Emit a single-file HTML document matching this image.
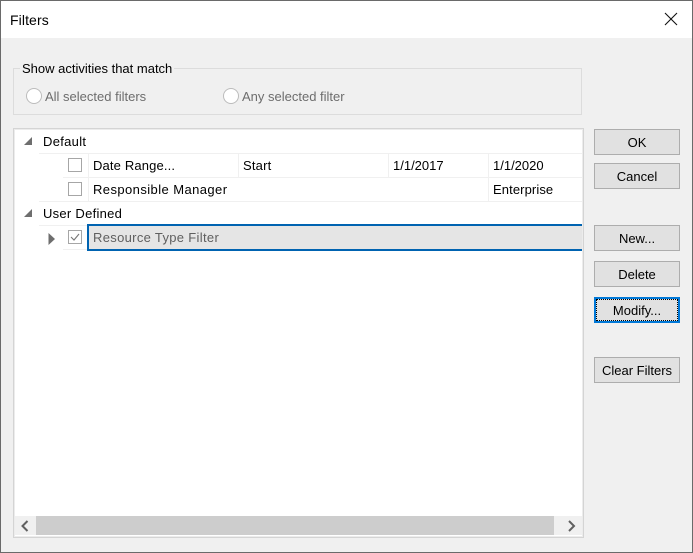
<!DOCTYPE html>
<html>
<head>
<meta charset="utf-8">
<style>
html,body{margin:0;padding:0;}
body{width:693px;height:553px;overflow:hidden;position:relative;background:#f0f0f0;font-family:"Liberation Sans",sans-serif;font-size:13px;color:#000;}
div{position:absolute;box-sizing:border-box;}
.t{white-space:nowrap;line-height:16px;height:16px;}
.l{background:#f0f0f0;}
.cb{width:14px;height:14px;border:1px solid #a6a6a6;background:#fff;left:68px;}
.btn{left:594px;width:86px;height:26px;background:#e1e1e1;border:1px solid #adadad;text-align:center;line-height:25px;white-space:nowrap;}
.r{width:16px;height:16px;border:1px solid #bcbcbc;border-radius:50%;background:#fff;top:88px;}
</style>
</head>
<body>
<div style="left:1px;top:1px;width:691px;height:37px;background:#fff;"></div>
<div class="t" style="left:10px;top:12px;font-size:14px;letter-spacing:.1px;">Filters</div>
<svg style="position:absolute;left:664px;top:12px;" width="14" height="14" viewBox="0 0 14 14"><path d="M1 1L13 13M13 1L1 13" stroke="#111" stroke-width="1.1" fill="none"/></svg>

<div style="left:13px;top:68px;width:569px;height:47px;border:1px solid #dcdcdc;"></div>
<div class="t" style="left:20px;top:61px;background:#f0f0f0;padding:0 2px;">Show activities that match</div>
<div class="r" style="left:26px;"></div>
<div class="t" style="left:45px;top:89px;color:#6d6d6d;">All selected filters</div>
<div class="r" style="left:223px;"></div>
<div class="t" style="left:242px;top:89px;color:#6d6d6d;">Any selected filter</div>

<div style="left:13px;top:128px;width:571px;height:410px;background:#fff;border:1px solid #d4d4d4;box-shadow:inset 0 0 0 1px #ececec;"></div>

<svg style="position:absolute;left:23px;top:136px;" width="10" height="10"><path d="M9 1V9H1Z" fill="#6e6e6e"/></svg>
<svg style="position:absolute;left:23px;top:208px;" width="10" height="10"><path d="M9 1V9H1Z" fill="#6e6e6e"/></svg>
<svg style="position:absolute;left:48px;top:232px;" width="9" height="14"><path d="M0.5 1L7 7L0.5 13Z" fill="#6e6e6e"/></svg>

<div class="t" style="left:43px;top:134px;letter-spacing:.3px;">Default</div>
<div class="l" style="left:39px;top:153px;width:543px;height:1px;"></div>
<div class="l" style="left:63px;top:177px;width:519px;height:1px;"></div>
<div class="l" style="left:39px;top:201px;width:543px;height:1px;"></div>
<div class="l" style="left:39px;top:225px;width:543px;height:1px;"></div>
<div class="l" style="left:63px;top:249px;width:519px;height:1px;"></div>
<div class="l" style="left:88px;top:153px;width:1px;height:48px;"></div>
<div class="l" style="left:238px;top:153px;width:1px;height:24px;"></div>
<div class="l" style="left:388px;top:153px;width:1px;height:24px;"></div>
<div class="l" style="left:488px;top:153px;width:1px;height:48px;"></div>

<div class="cb" style="top:158px;"></div>
<div class="t" style="left:93px;top:158px;letter-spacing:.15px;">Date Range...</div>
<div class="t" style="left:243px;top:158px;letter-spacing:.2px;">Start</div>
<div class="t" style="left:393px;top:158px;">1/1/2017</div>
<div class="t" style="left:493px;top:158px;">1/1/2020</div>

<div class="cb" style="top:182px;"></div>
<div class="t" style="left:93px;top:182px;letter-spacing:.42px;">Responsible Manager</div>
<div class="t" style="left:493px;top:182px;letter-spacing:.1px;">Enterprise</div>

<div class="t" style="left:43px;top:206px;letter-spacing:.27px;">User Defined</div>

<div class="cb" style="top:230px;"></div>
<svg style="position:absolute;left:68px;top:230px;" width="14" height="14"><path d="M3 7L6 10L11 4" stroke="#777" stroke-width="1.1" fill="none"/></svg>
<div style="left:87px;top:224px;width:495px;height:27px;background:#e5e5e5;border:2px solid #0063b1;border-right:none;"></div>
<div class="t" style="left:93px;top:230px;color:#5f5f5f;letter-spacing:.32px;">Resource Type Filter</div>

<div style="left:15px;top:516px;width:567px;height:19px;background:#f0f0f0;"></div>
<div style="left:36px;top:516px;width:518px;height:19px;background:#cdcdcd;"></div>
<svg style="position:absolute;left:20px;top:519px;" width="10" height="14"><path d="M7.500 2L2.500 7L7.500 12" stroke="#606060" stroke-width="2" fill="none"/></svg>
<svg style="position:absolute;left:567px;top:519px;" width="10" height="14"><path d="M2 2L7 7L2 12" stroke="#606060" stroke-width="2" fill="none"/></svg>

<div class="btn" style="top:129px;">OK</div>
<div class="btn" style="top:163px;">Cancel</div>
<div class="btn" style="top:225px;">New...</div>
<div class="btn" style="top:261px;">Delete</div>
<div class="btn" style="top:297px;border:2px solid #0078d7;line-height:23px;">Modify...<div style="left:0;top:0;right:0;bottom:0;border:1px dotted #000;"></div></div>
<div class="btn" style="top:357px;">Clear Filters</div>

<div style="left:0;top:0;width:693px;height:553px;border:1px solid #6a6a6a;"></div>
</body>
</html>
